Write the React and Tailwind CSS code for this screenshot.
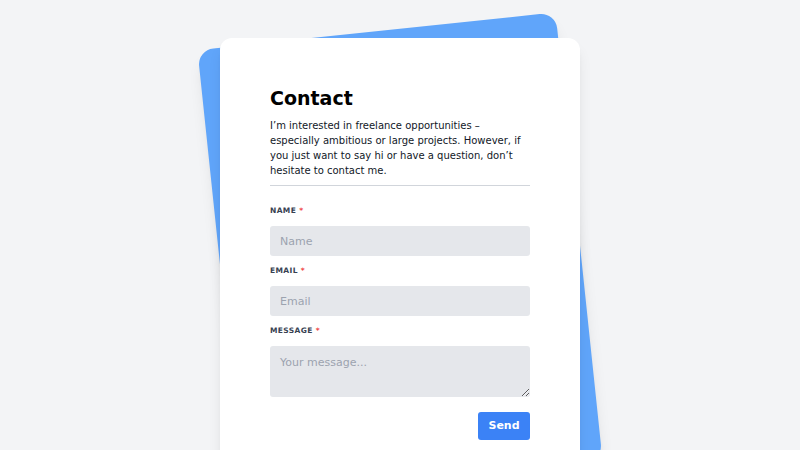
import React from "react";

function Field({ label, children }) {
  return (
    <div className="flex flex-col">
      <label className="mb-[10px] text-[7.5px] font-bold uppercase leading-[10px] tracking-wider text-[#374151]">
        {label} <span className="text-[#ef4444]">*</span>
      </label>
      {children}
    </div>
  );
}

export default function App() {
  return (
    <main className="flex min-h-screen justify-center overflow-hidden bg-[#f3f4f6] pt-[38px] font-['DejaVu_Sans',sans-serif]">
      <div className="relative h-fit w-[360px]">
        <div className="absolute inset-0 -translate-y-[8px] -rotate-6 rounded-2xl bg-[#60a5fa] shadow-lg"></div>
        <section className="relative rounded-xl bg-white px-[50px] pb-12 pt-12 shadow-lg">
          <h1 className="text-[19px] font-bold leading-6 text-black">Contact</h1>
          <p className="mt-2 text-[10px] leading-[15px] text-[#111827]">
            I’m interested in freelance opportunities – especially ambitious or large projects. However, if you just want to say hi or have a question, don’t hesitate to contact me.
          </p>
          <form className="mt-[7px] flex flex-col gap-[10px] border-t border-[#d1d5db] pt-[20px]" onSubmit={(e) => e.preventDefault()}>
            <Field label="Name">
              <input
                type="text"
                placeholder="Name"
                className="h-[30px] w-full rounded-[3px] bg-[#e5e7eb] px-[10px] text-[11px] text-[#374151] placeholder:text-[#9ca3af] outline-none"
              />
            </Field>
            <Field label="Email">
              <input
                type="email"
                placeholder="Email"
                className="h-[30px] w-full rounded-[3px] bg-[#e5e7eb] px-[10px] text-[11px] text-[#374151] placeholder:text-[#9ca3af] outline-none"
              />
            </Field>
            <Field label="Message">
              <textarea
                placeholder="Your message..."
                className="block h-[51px] w-full rounded-[3px] bg-[#e5e7eb] px-[10px] py-[9px] text-[11px] text-[#374151] placeholder:text-[#9ca3af] outline-none"
              />
            </Field>
            <div className="mt-[5px] flex justify-end">
              <button type="submit" className="h-[28px] w-[52px] rounded-[3px] bg-[#3b82f6] text-[11px] font-bold text-white">
                Send
              </button>
            </div>
          </form>
        </section>
      </div>
    </main>
  );
}
